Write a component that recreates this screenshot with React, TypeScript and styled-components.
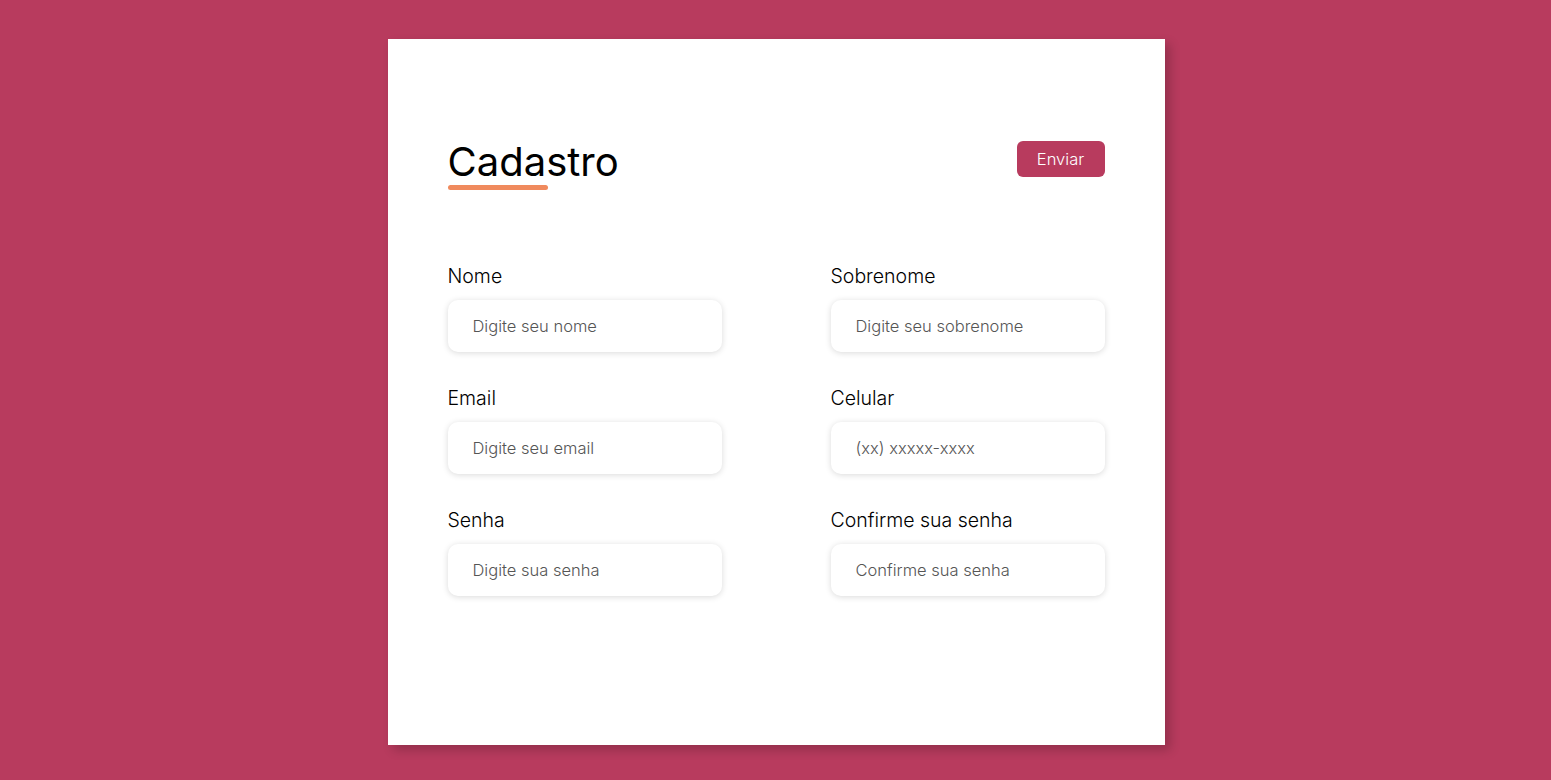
import styled, {createGlobalStyle} from "styled-components";

const GlobalStyle = createGlobalStyle`
  * {
    margin: 0;
    padding: 0;
    box-sizing: border-box;
    font-family: Inter, "Noto Sans", sans-serif;
  }

  body {
    background: #b83b5e;
    height: 780px;
    overflow: hidden;
  }
`

const Page = styled.main`
  display: flex;
  justify-content: center;
  padding: 39px 0 0 1px;
`

const Card = styled.form`
  width: 777px;
  height: 706px;
  background: #fff;
  box-shadow: 5px 5px 10px rgba(0, 0, 0, 0.2);
  padding: 100px 60px 0;
`

const Header = styled.div`
  display: flex;
  justify-content: space-between;
  align-items: flex-start;
  margin-bottom: 73px;
`

const Title = styled.h1`
  font-size: 40px;
  font-weight: 400;
  color: #000;
  line-height: 1;
  padding-top: 3px;

  &::after {
    content: '';
    display: block;
    width: 100px;
    height: 5px;
    margin-top: 3px;
    border-radius: 3px;
    background: #f08a5d;
  }
`

const Button = styled.button`
  width: 88px;
  height: 36px;
  margin-top: 2px;
  border: none;
  border-radius: 6px;
  background: #b83b5e;
  color: #fff;
  font-size: 16.5px;
  font-weight: 300;
  cursor: pointer;
`

const Grid = styled.div`
  display: grid;
  grid-template-columns: 274px 274px;
  justify-content: space-between;
  row-gap: 33px;
`

const Field = styled.label`
  display: flex;
  flex-direction: column;
  gap: 11px;
`

const Label = styled.span`
  font-size: 19.5px;
  font-weight: 300;
  color: #000;
  line-height: 26px;
`

const Input = styled.input`
  width: 100%;
  height: 52px;
  border: none;
  border-radius: 10px;
  padding: 0 25px;
  font-size: 16.5px;
  font-weight: 300;
  color: #333;
  box-shadow: 0 1px 6px rgba(0, 0, 0, 0.15);
  outline: none;

  &::placeholder {
    color: #555;
  }
`

const fields = [
    {label: 'Nome', placeholder: 'Digite seu nome', type: 'text'},
    {label: 'Sobrenome', placeholder: 'Digite seu sobrenome', type: 'text'},
    {label: 'Email', placeholder: 'Digite seu email', type: 'email'},
    {label: 'Celular', placeholder: '(xx) xxxxx-xxxx', type: 'tel'},
    {label: 'Senha', placeholder: 'Digite sua senha', type: 'password'},
    {label: 'Confirme sua senha', placeholder: 'Confirme sua senha', type: 'password'},
]

export default function App() {
    return (
        <>
            <GlobalStyle/>
            <Page>
                <Card onSubmit={e => e.preventDefault()}>
                    <Header>
                        <Title>Cadastro</Title>
                        <Button type="submit">Enviar</Button>
                    </Header>
                    <Grid>
                        {fields.map(f => (
                            <Field key={f.label}>
                                <Label>{f.label}</Label>
                                <Input type={f.type} placeholder={f.placeholder}/>
                            </Field>
                        ))}
                    </Grid>
                </Card>
            </Page>
        </>
    )
}
